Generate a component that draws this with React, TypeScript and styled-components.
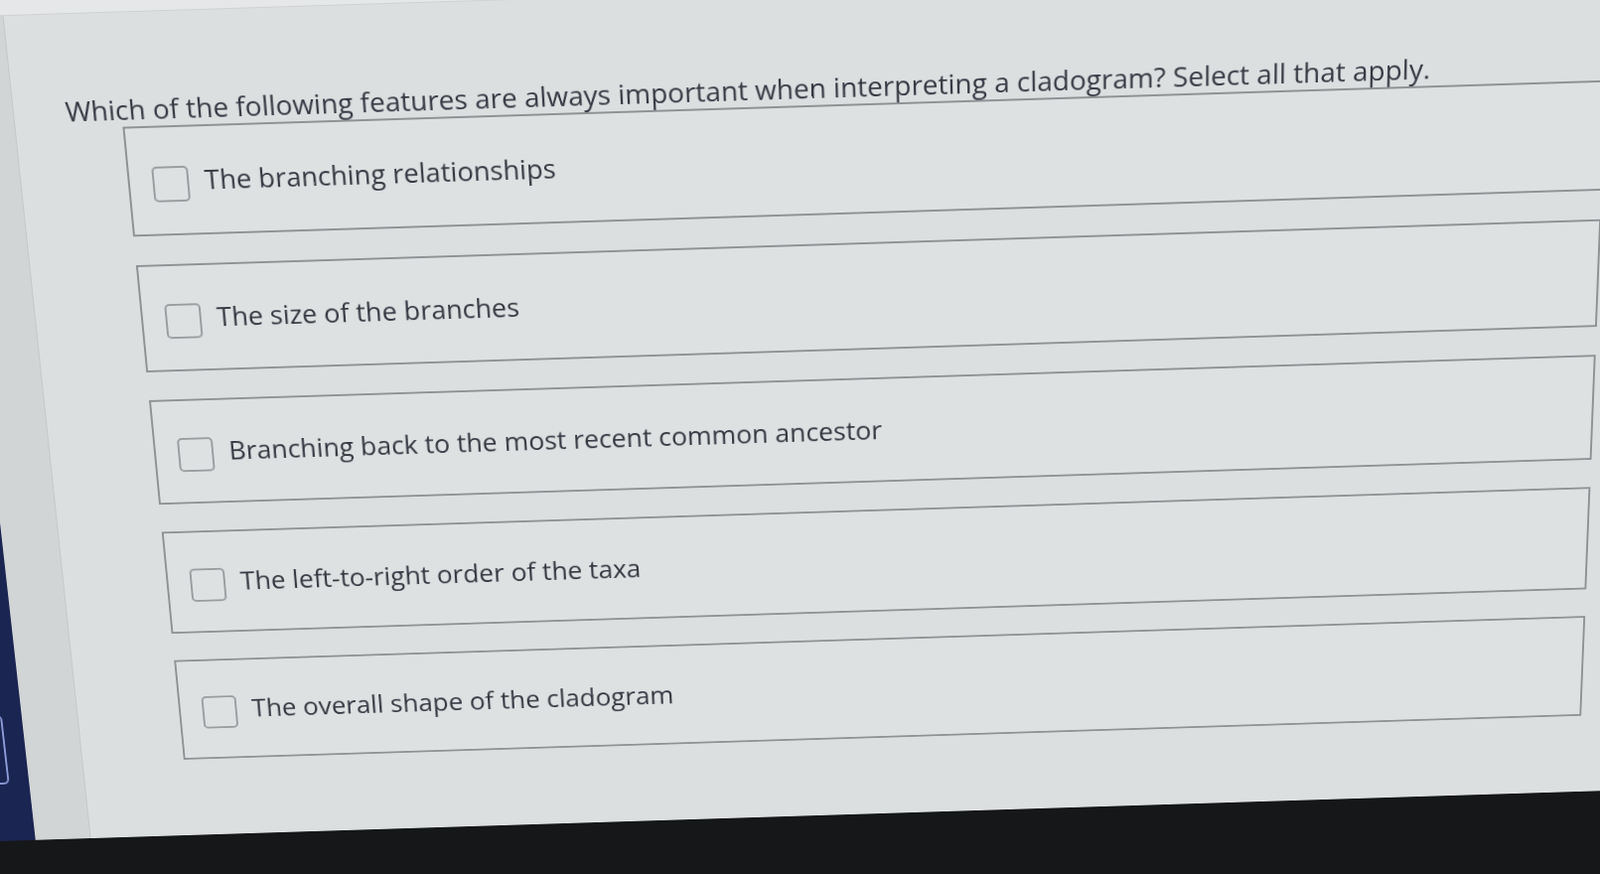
import styled, { createGlobalStyle } from "styled-components";
import { useState } from "react";

const GlobalStyle = createGlobalStyle`
  html, body {
    margin: 0;
    padding: 0;
    width: 100%;
    height: 100%;
    overflow: hidden;
    background: #161719;
  }
  #root {
    width: 1611px;
    height: 880px;
    overflow: hidden;
  }
`;

// the screen was photographed at an angle: tilt it a little...
const Stage = styled.div`
  margin: -20px 0 0 -200px;
  width: 2000px;
  height: 1100px;
  transform-origin: 264px 114px;
  transform: rotate(-1.8deg);
  font-family: "Open Sans", "Noto Sans", sans-serif;
`;

// ...and lean the bottom away from the camera
const Screen = styled.div`
  width: 100%;
  height: 100%;
  display: flex;
  flex-direction: column;
  transform-origin: 1033px 114px;
  transform: perspective(1600px) rotateX(-8.28deg);
`;

const TopStrip = styled.div`
  height: 34px;
  flex-shrink: 0;
  box-sizing: border-box;
  background: #e5e7e8;
  border-bottom: 1px solid #cfd2d3;
`;

const Body = styled.div`
  height: 894px;
  flex-shrink: 0;
  display: flex;
`;

const Rail = styled.div`
  width: 152px;
  flex-shrink: 0;
  box-sizing: border-box;
  background: #1b2552;
  padding: 748px 21px 0 60px;
`;

const NavButton = styled.div`
  height: 76px;
  border: 2px solid #8d9cd9;
  border-radius: 6px;
`;

const Gutter = styled.div`
  width: 60px;
  flex-shrink: 0;
  box-sizing: border-box;
  background: #d2d5d6;
  border-right: 1px solid #c5c8c9;
`;

const Main = styled.div`
  flex: 1;
  background: #dcdfe0;
  padding: 80px 0 0 52px;
`;

const Question = styled.div`
  font-size: 28px;
  line-height: 36px;
  color: #363843;
  white-space: nowrap;
`;

const OptionList = styled.div`
  display: flex;
  flex-direction: column;
  gap: 30px;
  margin-left: 56px;
  width: 1500px;
`;

const Option = styled.label`
  height: 114px;
  box-sizing: border-box;
  border: 2px solid #8f9294;
  display: flex;
  align-items: center;
  gap: 16px;
  padding: 6px 0 0 23px;
  cursor: pointer;
  background: #dee1e2;
`;

const Box = styled.span<{ checked: boolean }>`
  width: 37px;
  height: 37px;
  box-sizing: border-box;
  border: 2px solid #9a9da0;
  border-radius: 5px;
  background: ${(p) => (p.checked ? "#3c5bab" : "transparent")};
  flex-shrink: 0;
`;

const OptionText = styled.span`
  font-size: 27.5px;
  color: #353741;
  white-space: nowrap;
  margin-bottom: 7px;
`;

const Bezel = styled.div`
  flex: 1;
  background: #161719;
`;

const options = [
  "The branching relationships",
  "The size of the branches",
  "Branching back to the most recent common ancestor",
  "The left-to-right order of the taxa",
  "The overall shape of the cladogram",
];

function App() {
  const [checked, setChecked] = useState<boolean[]>(options.map(() => false));

  const toggle = (i: number) => {
    setChecked((prev) => prev.map((c, j) => (j === i ? !c : c)));
  };

  return (
    <>
      <GlobalStyle />
      <Stage>
        <Screen>
          <TopStrip />
          <Body>
            <Rail>
              <NavButton />
            </Rail>
            <Gutter />
            <Main>
              <Question>
                Which of the following features are always important when
                interpreting a cladogram? Select all that apply.
              </Question>
              <OptionList>
                {options.map((text, i) => (
                  <Option key={text} onClick={() => toggle(i)}>
                    <Box checked={checked[i]} />
                    <OptionText>{text}</OptionText>
                  </Option>
                ))}
              </OptionList>
            </Main>
          </Body>
          <Bezel />
        </Screen>
      </Stage>
    </>
  );
}

export default App;
